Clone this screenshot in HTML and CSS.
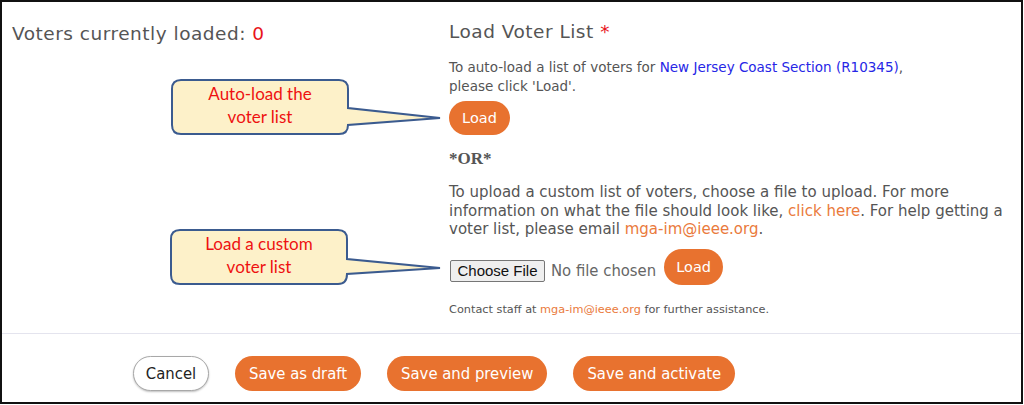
FILE: index.html
```html
<!DOCTYPE html>
<html lang="en">
<head>
<meta charset="utf-8">
<title>Load Voter List</title>
<link rel="stylesheet" href="styles.css">
</head>
<body>
<div class="frame">
  <div class="main">
    <div class="left">
      <div class="count">Voters currently loaded: <span class="zero">0</span></div>
    </div>
    <div class="right">
      <h2 class="title">Load Voter List <span class="req">*</span></h2>
      <p class="para p1">To auto-load a list of voters for <a class="blue" href="#">New Jersey Coast Section (R10345)</a>,<br>please click 'Load'.</p>
      <button class="pill load1">Load</button>
      <div class="or">*OR*</div>
      <p class="para p2">To upload a custom list of voters, choose a file to upload. For more<br>information on what the file should look like, <a class="orange" href="#">click here</a>. For help getting a<br>voter list, please email <a class="orange" href="#">mga-im@ieee.org</a>.</p>
      <div class="filerow">
        <button class="choose">Choose File</button>
        <span class="nofile">No file chosen</span>
        <button class="pill load2">Load</button>
      </div>
      <p class="contact">Contact staff at <a class="orange" href="#">mga-im@ieee.org</a> for further assistance.</p>
    </div>
  </div>
  <div class="footer">
    <button class="pill cancel">Cancel</button>
    <button class="pill">Save as draft</button>
    <button class="pill">Save and preview</button>
    <button class="pill">Save and activate</button>
  </div>

  <div class="callout callout1">
    <svg class="bubble" width="276" height="60" viewBox="0 0 276 60">
      <path d="M 11 2 H 169 Q 178 2 178 11 V 30 L 270 40 L 178 47 Q 178 56 169 56 H 11 Q 2 56 2 47 V 11 Q 2 2 11 2 Z" fill="#fdf1c9" stroke="#3b5b8f" stroke-width="2"/>
    </svg>
    <div class="ctext">Auto-load the<br>voter list</div>
  </div>
  <div class="callout callout2">
    <svg class="bubble" width="276" height="60" viewBox="0 0 276 60">
      <path d="M 11 2 H 169 Q 178 2 178 11 V 31 L 271 40 L 178 46 Q 178 56 169 56 H 11 Q 2 56 2 47 V 11 Q 2 2 11 2 Z" fill="#fdf1c9" stroke="#3b5b8f" stroke-width="2"/>
    </svg>
    <div class="ctext">Load a custom<br>voter list</div>
  </div>
</div>
</body>
</html>
```

FILE: styles.css
```css
* { box-sizing: border-box; }
html, body { margin: 0; padding: 0; background: #ffffff; }
body { font-family: "DejaVu Sans", sans-serif; color: #555555; }

.frame {
  position: relative;
  width: 1023px;
  height: 404px;
  border: 2px solid #111111;
  background: #ffffff;
}

.main {
  display: flex;
  padding-bottom: 16px;
}

.left {
  width: 447px;
  padding-left: 10px;
  padding-top: 21px;
}

.count {
  font-size: 18.5px;
  letter-spacing: 0.5px;
  line-height: 22px;
  color: #555555;
}
.zero { color: #e8141a; }

.right {
  flex: 1;
  padding-top: 19px;
}

.title {
  margin: 0;
  font-size: 18.5px;
  letter-spacing: 0.5px;
  line-height: 22px;
  font-weight: normal;
  color: #555555;
}
.req { color: #e8141a; }

.para {
  margin: 0;
  line-height: 18.5px;
  color: #555555;
}
.p1 { margin-top: 15px; font-size: 13.5px; }
.p2 { margin-top: 15px; font-size: 15px; }

a { text-decoration: none; }
.blue { color: #2626e6; }
.orange { color: #ea7a3c; }

.pill {
  display: inline-flex;
  align-items: center;
  justify-content: center;
  height: 35px;
  padding: 0 14px;
  border: none;
  border-radius: 18px;
  background: #e8722f;
  color: #ffffff;
  font-family: "DejaVu Sans Condensed", "DejaVu Sans", sans-serif;
  font-size: 16.5px;
}

.load1 {
  margin-top: 6px;
  width: 61px;
  height: 34px;
  padding: 0;
  font-family: "DejaVu Sans", sans-serif;
  font-size: 14.5px;
}

.or {
  margin-top: 15px;
  font-family: "Liberation Serif", serif;
  font-weight: bold;
  font-size: 17px;
  line-height: 18px;
  color: #555555;
}

.filerow {
  display: flex;
  align-items: center;
  margin-top: 10px;
}

.choose {
  margin-top: 8px;
  margin-left: 1px;
  height: 22px;
  width: 95px;
  padding: 0;
  border: 1px solid #767676;
  border-radius: 2px;
  background: #efefef;
  color: #111111;
  font-family: "Liberation Sans", Arial, sans-serif;
  font-size: 15px;
}

.nofile {
  margin-top: 8px;
  margin-left: 6px;
  font-family: "DejaVu Sans Condensed", "DejaVu Sans", sans-serif;
  font-size: 16.5px;
  color: #666666;
}

.load2 {
  margin-left: 8px;
  width: 59px;
  height: 36px;
  padding: 0;
  font-family: "DejaVu Sans", sans-serif;
  font-size: 14.5px;
}

.contact {
  margin: 18px 0 0;
  font-size: 11.3px;
  line-height: 14px;
  color: #555555;
}

.footer {
  border-top: 1px solid #e4e4ee;
  display: flex;
  gap: 26px;
  padding-top: 22px;
  padding-left: 131px;
}

.footer .cancel {
  background: #ffffff;
  color: #222222;
  border: 1px solid #a8a8a8;
  box-shadow: 0 1px 2px rgba(0, 0, 0, 0.25);
  width: 76px;
  padding: 0;
}

.callout {
  position: absolute;
  width: 276px;
  height: 60px;
}
.callout1 { left: 168px; top: 76px; }
.callout2 { left: 167px; top: 226px; }

.bubble { position: absolute; left: 0; top: 0; }

.ctext {
  position: absolute;
  left: 2px;
  top: 4px;
  width: 176px;
  text-align: center;
  font-family: Lato, "Open Sans", sans-serif;
  font-size: 17px;
  line-height: 23px;
  color: #ee1111;
}
```
